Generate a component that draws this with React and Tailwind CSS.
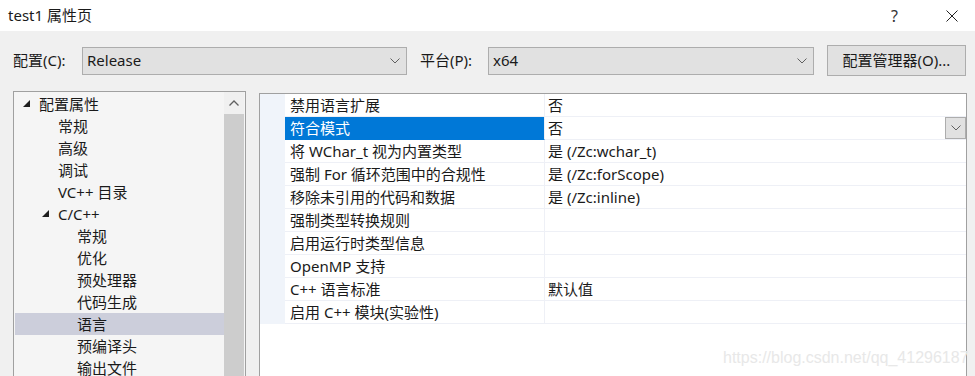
import React from "react";

const FONT = { fontFamily: '"Noto Sans", "Noto Sans CJK SC", sans-serif' };

function Tri() {
  return (
    <svg width="8" height="8" viewBox="0 0 8 8" className="shrink-0">
      <polygon points="7,0 7,7 0,7" fill="#1e1e1e" />
    </svg>
  );
}

function Chevron({ color = "#606060" }) {
  return (
    <svg width="10" height="6" viewBox="0 0 10 6">
      <polyline points="0.5,0.5 5,5 9.5,0.5" fill="none" stroke={color} strokeWidth="1" />
    </svg>
  );
}

const tree = [
  { t: "配置属性", lvl: 0, tri: true },
  { t: "常规", lvl: 1 },
  { t: "高级", lvl: 1 },
  { t: "调试", lvl: 1 },
  { t: "VC++ 目录", lvl: 1 },
  { t: "C/C++", lvl: 1, tri: true },
  { t: "常规", lvl: 2 },
  { t: "优化", lvl: 2 },
  { t: "预处理器", lvl: 2 },
  { t: "代码生成", lvl: 2 },
  { t: "语言", lvl: 2, sel: true },
  { t: "预编译头", lvl: 2 },
  { t: "输出文件", lvl: 2 },
];

const props = [
  ["禁用语言扩展", "否"],
  ["符合模式", "否", true],
  ["将 WChar_t 视为内置类型", "是 (/Zc:wchar_t)"],
  ["强制 For 循环范围中的合规性", "是 (/Zc:forScope)"],
  ["移除未引用的代码和数据", "是 (/Zc:inline)"],
  ["强制类型转换规则", ""],
  ["启用运行时类型信息", ""],
  ["OpenMP 支持", ""],
  ["C++ 语言标准", "默认值"],
  ["启用 C++ 模块(实验性)", ""],
];

function TreeRow({ item }) {
  let content;
  if (item.lvl === 0) {
    content = (
      <div className="flex items-center pl-[8px]">
        <Tri />
        <span className="ml-[8px]">{item.t}</span>
      </div>
    );
  } else if (item.lvl === 1 && item.tri) {
    content = (
      <div className="flex items-center pl-[27px]">
        <Tri />
        <span className="ml-[8px]">{item.t}</span>
      </div>
    );
  } else if (item.lvl === 1) {
    content = <div className="pl-[43px]">{item.t}</div>;
  } else {
    content = <div className="pl-[62px]">{item.t}</div>;
  }
  return (
    <div className={"h-[22px] flex items-center " + (item.sel ? "bg-[#cccedb]" : "")}>
      {content}
    </div>
  );
}

export default function App() {
  return (
    <div
      className="relative w-[975px] h-[376px] overflow-hidden bg-[#f0f0f0] text-[15px] text-[#1a1a1a] leading-none"
      style={FONT}
    >
      {/* Title bar */}
      <div className="h-[31px] bg-white flex items-center pl-[8px]">
        <span className="text-[15px]">test1 属性页</span>
        <div className="ml-auto flex items-center">
          <span className="text-[16px] text-[#333] mr-[48px]">?</span>
          <svg width="12" height="12" viewBox="0 0 12 12" className="mr-[17px]">
            <path d="M0.5 0.5 L11.5 11.5 M11.5 0.5 L0.5 11.5" stroke="#222" strokeWidth="1" />
          </svg>
        </div>
      </div>

      {/* Config row */}
      <div className="flex items-center h-[31px] mt-[14px] pl-[13px]">
        <div className="w-[69px]">配置(C):</div>
        <div className="w-[325px] h-[28px] bg-[#e1e1e1] border border-[#adadad] flex items-center pl-[4px] pr-[4px]">
          <span>Release</span>
          <span className="ml-auto mr-[2px]"><Chevron /></span>
        </div>
        <div className="w-[68px] ml-[13px]">平台(P):</div>
        <div className="w-[326px] h-[28px] bg-[#e1e1e1] border border-[#adadad] flex items-center pl-[4px] pr-[4px]">
          <span>x64</span>
          <span className="ml-auto mr-[2px]"><Chevron /></span>
        </div>
        <div className="w-[139px] h-[31px] ml-[13px] bg-[#e1e1e1] border border-[#adadad] flex items-center justify-center">
          配置管理器(O)...
        </div>
      </div>

      {/* Content */}
      <div className="flex items-start mt-[15px] pl-[13px]">
        {/* Tree */}
        <div className="w-[233px] h-[300px] border border-[#a0a0a0] bg-[#f5f5f5] flex">
          <div className="flex-1 pt-[1px] pl-[1px]">
            {tree.map((it, i) => (
              <TreeRow key={i} item={it} />
            ))}
          </div>
          <div className="w-[20px] mr-[1px] bg-[#f0f0f0] flex flex-col">
            <div className="h-[22px] flex items-center justify-center">
              <svg width="10" height="6" viewBox="0 0 10 6">
                <polyline points="0.5,5.5 5,1 9.5,5.5" fill="none" stroke="#606060" strokeWidth="1.3" />
              </svg>
            </div>
            <div className="flex-1 bg-[#cdcdcd]" />
          </div>
        </div>

        {/* Property grid */}
        <div className="ml-[13px] mt-[2px] w-[708px] h-[300px] border border-[#a0a0a0] bg-white">
          {props.map(([name, val, sel], i) => (
            <div key={i} className="flex h-[23px]">
              <div className="w-[25px] bg-[#f0f4fa] shrink-0" />
              <div
                className={
                  "w-[260px] shrink-0 flex items-center pl-[5px] border-b border-r border-[#eef0f6] " +
                  (sel ? "bg-[#0078d7] text-white border-b-[#0078d7]" : "")
                }
              >
                {name}
              </div>
              <div className="flex-1 flex items-center pl-[3px] border-b border-[#eef0f6]">
                <span>{val}</span>
                {sel && (
                  <div className="ml-auto w-[21px] h-[22px] bg-[#e1e1e1] border border-[#adadad] flex items-center justify-center">
                    <Chevron />
                  </div>
                )}
              </div>
            </div>
          ))}
        </div>
      </div>

      {/* Watermark */}
      <div
        className="absolute left-[723px] top-[350px] text-[16px] text-[#e8e8e8]"
        style={{ fontFamily: '"Liberation Sans", Arial, sans-serif' }}
      >
        https://blog.csdn.net/qq_41296187
      </div>
    </div>
  );
}
